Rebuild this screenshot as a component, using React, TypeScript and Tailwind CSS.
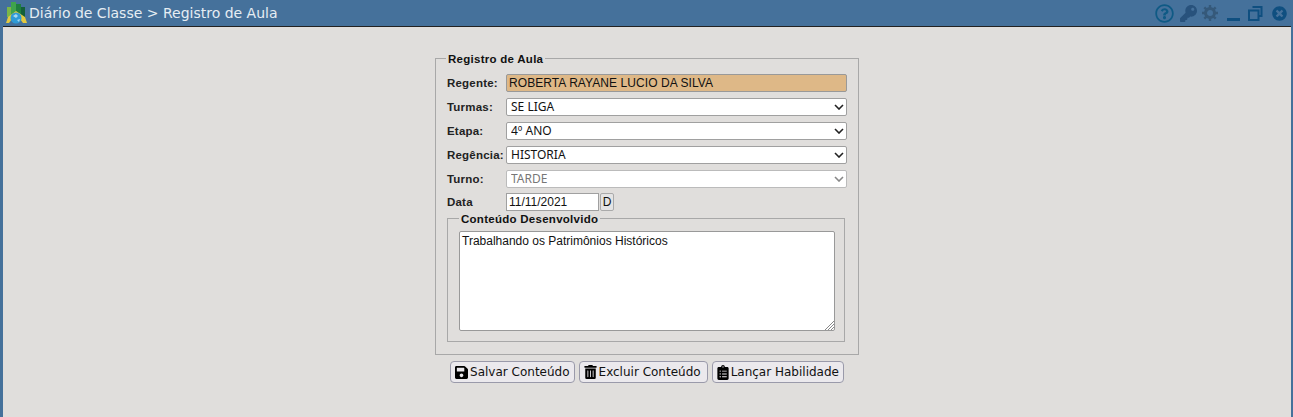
import { FaClipboardList, FaKey, FaRegQuestionCircle, FaSave, FaTimesCircle, FaTrashAlt } from "react-icons/fa";

const labelClass = "w-[59px] shrink-0 text-[11.5px] font-bold text-[#222] tracking-[0.2px]";
const legendClass = "px-[2px] pt-[2px] text-[11.5px] font-bold text-[#111] tracking-[0.27px]";

function Logo() {
  return (
    <svg width="22" height="22" viewBox="0 0 22 22" className="shrink-0">
      <rect x="1" y="5" width="4" height="10" fill="#7ab648" />
      <rect x="5" y="0" width="5" height="12" fill="#3fa34d" />
      <rect x="10" y="2" width="5" height="10" fill="#1f7f3f" />
      <rect x="15" y="5" width="4" height="11" fill="#14603a" />
      <path d="M0 21l2-6 8-6 9 6 2 6h-4l-3-4-4-2-4 2-3 4z" fill="#e3c93f" />
      <circle cx="10" cy="16" r="5.5" fill="#2f9bd6" />
      <path d="M7 14l3-2 2 2-2 2zM11 18l3-1-1 3z" fill="#a6d8f0" />
    </svg>
  );
}

function WindowIcons() {
  return (
    <div className="flex items-center text-[#1f5583]">
      <FaRegQuestionCircle className="h-[19px] w-[19px] text-[#0f5a85]" />
      <FaKey className="ml-[6px] h-[17px] w-[17px] text-[#28527c]" />
      {/* gear: thick ring with teeth */}
      <svg width="16" height="16" viewBox="0 0 16 16" className="ml-[5px] text-[#35597a]">
        <circle cx="8" cy="8" r="4.5" fill="none" stroke="currentColor" strokeWidth="3" />
        <path
          d="M8 0v3M8 13v3M0 8h3M13 8h3M2.3 2.3l2.1 2.1M11.6 11.6l2.1 2.1M2.3 13.7l2.1-2.1M11.6 4.4l2.1-2.1"
          stroke="currentColor"
          strokeWidth="2.4"
          fill="none"
        />
      </svg>
      <span className="mt-[13px] ml-[9px] h-[3px] w-[13px] bg-[#0f4f80]" />
      <svg width="15" height="15" viewBox="0 0 15 15" className="ml-[8px] text-[#0f4f80]">
        <path d="M4.5 1h9v9h-3M1 4.5h9.5V14H1z" fill="none" stroke="currentColor" strokeWidth="2" />
      </svg>
      <FaTimesCircle className="ml-[9px] h-[15px] w-[15px] text-[#0f4f80]" />
    </div>
  );
}

function Row({ label, children }: { label: string; children: React.ReactNode }) {
  return (
    <div className="flex h-[18px] items-center">
      <span className={labelClass}>{label}</span>
      {children}
    </div>
  );
}

function Select({ value, disabled }: { value: string; disabled?: boolean }) {
  return (
    <div className="relative h-[18px] w-[341px]">
      <select
        disabled={disabled}
        defaultValue={value}
        className="block h-full w-full appearance-none rounded-[2px] border border-[#a0a0a0] bg-white pb-[1px] pl-[4px] text-[12px] leading-none text-[#111] font-['Noto_Sans',sans-serif] disabled:border-[#bbb] disabled:text-[#777]"
      >
        <option>{value}</option>
      </select>
      <svg
        width="10"
        height="6"
        viewBox="0 0 10 6"
        className={`pointer-events-none absolute top-[6px] right-[3px] ${disabled ? "text-[#888]" : "text-[#222]"}`}
      >
        <path d="M1 1l4 4 4-4" fill="none" stroke="currentColor" strokeWidth="1.6" />
      </svg>
    </div>
  );
}

function ActionButton({ icon, children, wide }: { icon: React.ReactNode; children: string; wide?: boolean }) {
  return (
    <button
      className={`flex h-[22px] items-center gap-[2px] rounded-[4px] border border-[#9a9aaa] bg-[#ebe9ed] pl-[4px] text-[12px] text-[#111] font-['DejaVu_Sans',sans-serif] ${wide ? "pr-[6px]" : "pr-[4px]"}`}
    >
      {icon}
      {children}
    </button>
  );
}

export default function App() {
  return (
    <div className="flex h-[417px] w-[1293px] flex-col bg-[#45719b] font-['Liberation_Sans',sans-serif]">
      {/* Title bar */}
      <div className="flex h-[26px] shrink-0 items-center justify-between px-[6px]">
        <div className="flex items-center gap-[1px]">
          <Logo />
          <span className="text-[14px] text-[#e6edf3] font-['DejaVu_Sans',sans-serif]">Diário de Classe &gt; Registro de Aula</span>
        </div>
        <WindowIcons />
      </div>

      {/* Body */}
      <div className="mr-[2px] ml-[3px] flex flex-1 flex-col items-center border-t border-[#222] bg-[#e0dedc] pt-[22px]">
        <fieldset className="h-[306px] w-[424px] border border-[#a8a8a8] pr-[11px] pl-[11px]">
          <legend className={`ml-[-1px] ${legendClass}`}>Registro de Aula</legend>
          <div className="flex flex-col gap-[6px] pt-[6px]">
            <Row label="Regente:">
              <input
                readOnly
                value="ROBERTA RAYANE LUCIO DA SILVA"
                className="h-[18px] w-[341px] rounded-[2px] border border-[#999] bg-[#deb887] pl-[2px] text-[12px] tracking-[0.07px] text-[#111] outline-none"
              />
            </Row>
            <Row label="Turmas:">
              <Select value="SE LIGA" />
            </Row>
            <Row label="Etapa:">
              <Select value="4º ANO" />
            </Row>
            <Row label="Regência:">
              <Select value="HISTÓRIA" />
            </Row>
            <Row label="Turno:">
              <Select value="TARDE" disabled />
            </Row>
            <div className="mt-[-1px] flex h-[18px] items-center">
              <span className={labelClass}>Data</span>
              <input
                readOnly
                value="11/11/2021"
                className="h-[18px] w-[93px] border border-[#a0a0a0] bg-white pl-[2px] text-[12px] text-[#111] outline-none"
              />
              <button className="ml-[1px] h-[18px] w-[14px] rounded-[2px] border border-[#aaa] bg-[#e4e4e4] text-center text-[12px] leading-none text-[#111]">
                D
              </button>
            </div>
          </div>

          <fieldset className="mt-[-2px] h-[133px] w-[397px] border border-[#a8a8a8] pt-[2px] pr-[9px] pl-[11px]">
            <legend className={legendClass}>Conteúdo Desenvolvido</legend>
            <div className="relative h-[100px] w-[376px]">
              <textarea
                readOnly
                value="Trabalhando os Patrimônios Históricos"
                className="block h-full w-full resize-none rounded-[2px] border border-[#999] bg-white p-[2px] text-[12px] leading-[14px] text-[#111] outline-none"
              />
              {/* resize grip */}
              <svg width="10" height="10" viewBox="0 0 10 10" className="absolute right-[1px] bottom-[1px] text-[#888]">
                <path d="M1 10L10 1M4 10l6-6M7 10l3-3" stroke="currentColor" strokeWidth="1" fill="none" />
              </svg>
            </div>
          </fieldset>
        </fieldset>

        <div className="mt-[6px] flex gap-[4px]">
          <ActionButton icon={<FaSave className="h-[15px] w-[13px] text-black" />}>Salvar Conteúdo</ActionButton>
          <ActionButton wide icon={<FaTrashAlt className="h-[14px] w-[13px] text-black" />}>
            Excluir Conteúdo
          </ActionButton>
          <ActionButton icon={<FaClipboardList className="h-[15px] w-[12px] text-black" />}>Lançar Habilidade</ActionButton>
        </div>
      </div>
    </div>
  );
}
